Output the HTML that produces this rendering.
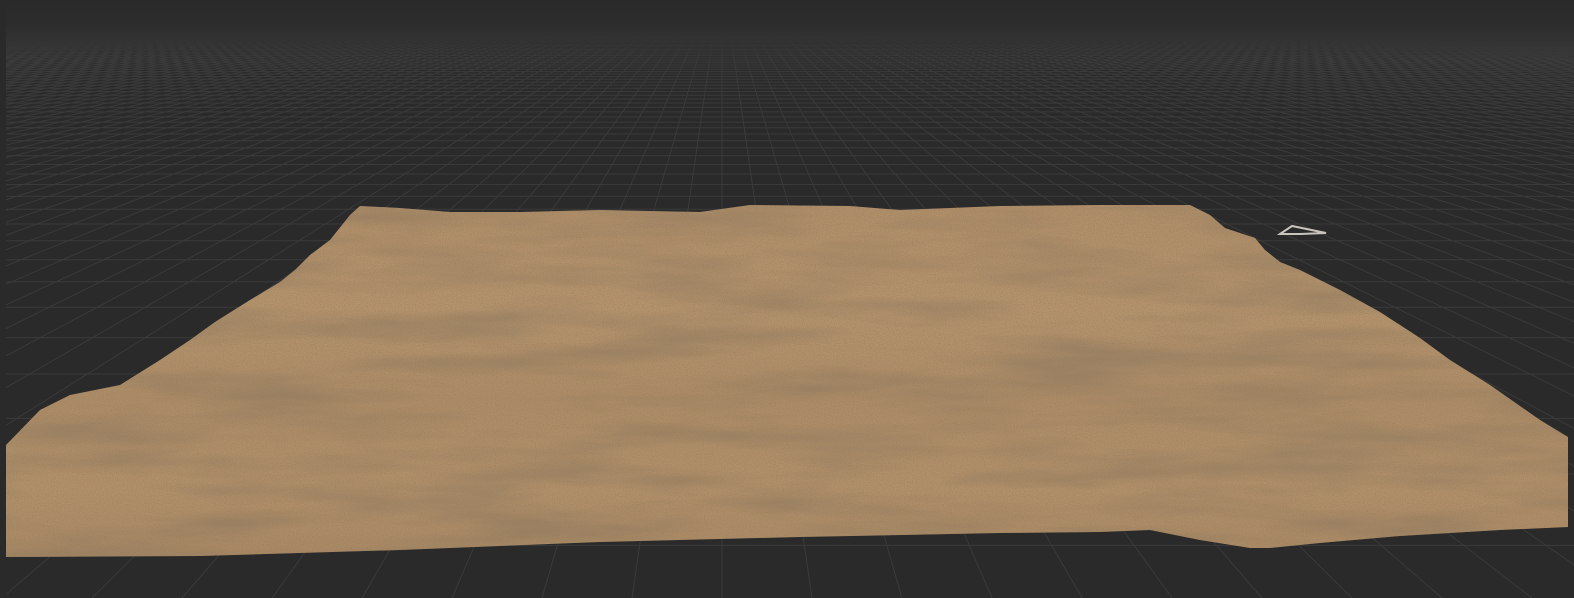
<!DOCTYPE html>
<html><head><meta charset="utf-8"><style>html,body{margin:0;padding:0;background:#2a2a2a;overflow:hidden;width:1574px;height:598px}svg{display:block;position:absolute;left:0;top:0;overflow:hidden}</style></head>
<body>
<svg id="s" width="1574" height="598" viewBox="0 0 1574 598" xmlns="http://www.w3.org/2000/svg">
<defs>
<linearGradient id="fade" x1="0" y1="0" x2="0" y2="1">
<stop offset="0" stop-color="#2a2a2a" stop-opacity="1"/>
<stop offset="0.4" stop-color="#2a2a2a" stop-opacity="0.85"/>
<stop offset="1" stop-color="#2a2a2a" stop-opacity="0"/>
</linearGradient>
<linearGradient id="sand" x1="0" y1="0" x2="0" y2="1">
<stop offset="0" stop-color="#b08e68"/>
<stop offset="0.3" stop-color="#b5936c"/>
<stop offset="0.55" stop-color="#ad8c66"/>
<stop offset="0.8" stop-color="#b29069"/>
<stop offset="1" stop-color="#aa8964"/>
</linearGradient>
<filter id="tex" x="0" y="0" width="100%" height="100%" color-interpolation-filters="sRGB">
<feTurbulence type="fractalNoise" baseFrequency="0.005 0.035" numOctaves="4" seed="3" result="n"/>
<feColorMatrix in="n" type="matrix" values="0 0 0 0 0.55  0 0 0 0 0.47  0 0 0 0 0.37  0 0 0 -2.2 1.3" result="d"/>
<feComponentTransfer in="d" result="d2"><feFuncA type="linear" slope="0.6" intercept="0"/></feComponentTransfer>
<feComposite in="d2" in2="SourceGraphic" operator="in" result="dm"/>
<feTurbulence type="fractalNoise" baseFrequency="0.9" numOctaves="1" seed="7" result="g"/>
<feColorMatrix in="g" type="matrix" values="0 0 0 0 0.55  0 0 0 0 0.48  0 0 0 0 0.38  0 0 0 -1.2 0.7" result="gd"/>
<feComposite in="gd" in2="SourceGraphic" operator="in" result="gm"/>
<feMerge><feMergeNode in="SourceGraphic"/><feMergeNode in="dm"/><feMergeNode in="gm"/></feMerge>
</filter>
</defs>
<rect width="1574" height="598" fill="#2a2a2a"/>
<g id="grid" stroke="#3a3a3a" stroke-width="1" fill="none"></g>
<rect width="1574" height="60" fill="url(#fade)"/>
<rect x="0" y="0" width="6" height="598" fill="#2a2a2a"/>
<path d="M1280 234L1292 226L1326 233L1300 234Z" fill="none" stroke="#c8c4bc" stroke-width="2"/>
<path d="M6 445L40 410L70 395L120 385L160 360L190 340L215 322L250 300L280 282L295 270L310 255L330 240L350 215L360 206L400 208L450 212L520 212L600 210L700 212L750 205L850 206L900 210L1000 206L1100 205L1190 205L1210 215L1225 228L1255 238L1265 250L1280 262L1300 270L1340 290L1380 312L1420 338L1450 360L1490 385L1540 420L1568 437L1568 527L1500 530L1400 536L1320 543L1270 548L1250 548L1200 540L1150 530L1100 532L1000 533L800 537L600 542L400 550L200 556L6 557Z" fill="url(#sand)" filter="url(#tex)"/>
</svg>
<script>
(function(){
var g=document.getElementById('grid'),d='',vx=722,vy=-26;
for(var n=6;n<=160;n++){var y=vy+4000/n;if(y<0)break;d+='M0 '+y.toFixed(1)+'H1574';}
for(var k=-140;k<=140;k++){var xb=vx+90*k;d+='M'+vx+' '+vy+'L'+xb+' 598';}
var p=document.createElementNS('http://www.w3.org/2000/svg','path');p.setAttribute('d',d);g.appendChild(p);
})();
</script>
</body></html>
